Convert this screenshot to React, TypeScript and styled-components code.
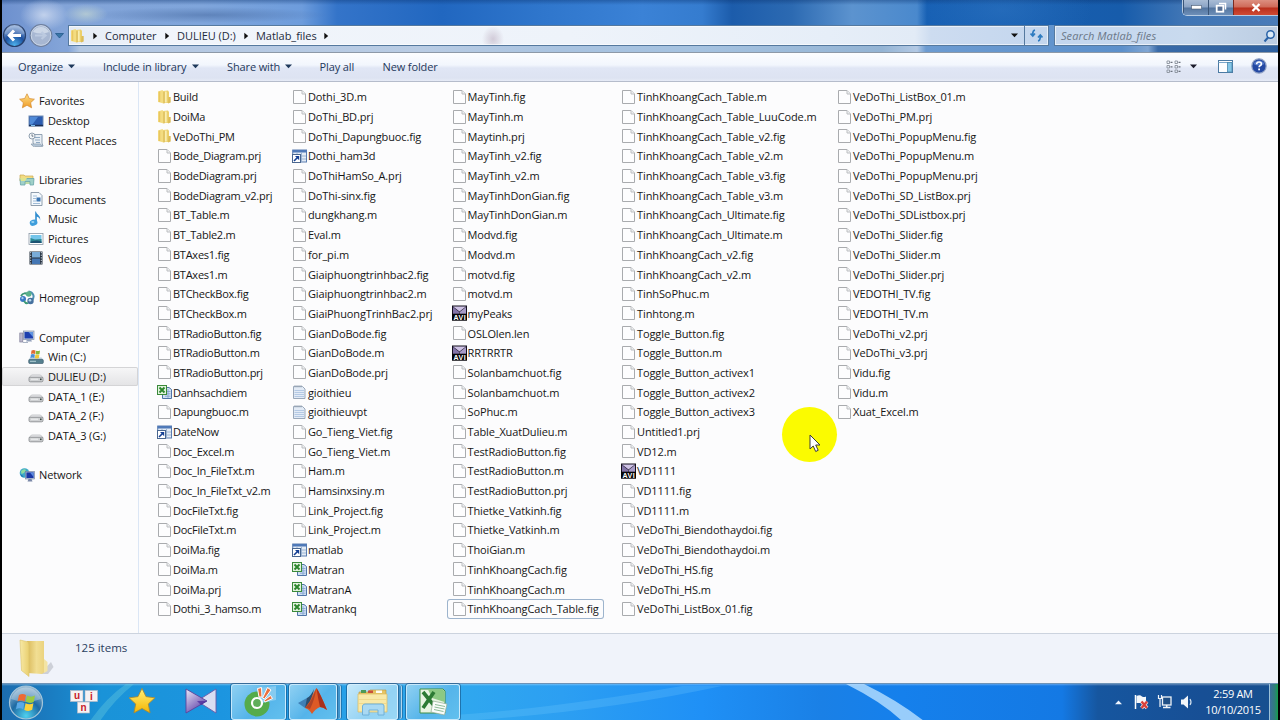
import React from "react";
import styled, { createGlobalStyle, css } from "styled-components";

const GlobalStyle = createGlobalStyle`
  html, body { margin: 0; padding: 0; background: #000; overflow: hidden; }
  * { box-sizing: border-box; }
`;

const ROW = "19.69px";

const Screen = styled.div`
  position: relative;
  width: 1280px;
  height: 720px;
  padding: 0 2px;
  background: #000;
  overflow: hidden;
  display: flex;
  flex-direction: column;
  font-family: "Open Sans", "Noto Sans", sans-serif;
  font-size: 11px;
  color: #161616;
  svg { display: block; flex: none; }
`;

/* ---------- window frame ---------- */

const Frame = styled.header`
  height: 53px;
  flex: none;
  display: flex;
  flex-direction: column;
  border-bottom: 1px solid #8d99a8;
  background:
    radial-gradient(ellipse 24px 16px at 42px 15px, rgba(205, 218, 240, 0.85), transparent),
    radial-gradient(ellipse 22px 10px at 84px 14px, rgba(196, 214, 210, 0.7), transparent),
    radial-gradient(ellipse 120px 8px at 206px 15px, rgba(70, 105, 160, 0.55), transparent),
    radial-gradient(ellipse 90px 40px at 1000px 10px, rgba(60, 130, 205, 0.35), transparent),
    linear-gradient(180deg, rgba(10, 50, 110, 0.4) 0, transparent 5px, transparent 100%),
    linear-gradient(90deg, #6d90ce 0, #83a4d8 60px, #7fa5db 200px, #6d9cdc 300px, #3474c9 335px,
      #2167c0 440px, #2f76cc 540px, #3b82d6 640px, #357ccf 700px, #1c5cab 730px, #2c6ab2 790px,
      #5c93cf 850px, #4a89cd 915px, #165fb3 925px, #175cab 1120px, #3f75b5 1180px, #4b7cb8 1276px);
`;

const TitleBar = styled.div`
  height: 25px;
  flex: none;
  display: flex;
  justify-content: flex-end;
`;

const WindowButtons = styled.div`
  display: flex;
  height: 16px;
  border: 1px solid #b6cbe2;
  border-top: 0;
  border-right: 0;
  border-radius: 0 0 0 5px;
  overflow: hidden;
`;

const WindowButton = styled.div<{ $w: number; $close?: boolean }>`
  width: ${(p) => p.$w}px;
  display: flex;
  align-items: center;
  justify-content: center;
  border-left: 1px solid ${(p) => (p.$close ? "#7b2a20" : "#3a5577")};
  background: ${(p) =>
    p.$close
      ? "linear-gradient(180deg, #dc8f80 0, #cf6a58 7px, #b92f1c 8px, #cf4a33 100%)"
      : "linear-gradient(180deg, #a9bcd5 0, #8ba4c5 7px, #54759f 8px, #6d8fb8 100%)"};
`;

const NavRow = styled.div`
  height: 27px;
  padding-bottom: 6px;
  display: flex;
  align-items: center;
  background:
    linear-gradient(90deg, rgba(120, 160, 205, 0) 0, rgba(120, 160, 205, 0) 66px, #b3c7e2 78px,
      #b9cce4 420px, #a9c3e0 560px, #a5c2e0 700px, #94b4d4 880px, #b3c9e4 915px, #6c9bd1 924px,
      #5c90cb 1120px, #80a6d3 1146px, #386aa8 1156px, #2e609f 1276px);
`;

const NavButtons = styled.div`
  width: 66px;
  display: flex;
  align-items: center;
  gap: 2px;
  padding-left: 0;
`;

const AddressBar = styled.div`
  width: 981px;
  height: 21px;
  border: 1px solid #55799f;
  box-shadow: inset 0 0 0 1px rgba(255, 255, 255, 0.6);
  background:
    radial-gradient(ellipse 11px 13px at 424px 13px, rgba(200, 190, 205, 0.75), transparent),
    linear-gradient(90deg, #e4ebf5 0, #f1f5fb 100px, #eef3fa 500px, #e6eef8 760px, #e2ebf6 846px,
      #cddcf0 862px, #c3d6ee 100%);
  display: flex;
  align-items: center;
  color: #1e2b3c;
  line-height: 15px;
  letter-spacing: -0.03px;
`;

const CrumbList = styled.div`
  flex: 1;
  display: flex;
  align-items: center;
`;

const Crumb = styled.span<{ $w: number }>`
  width: ${(p) => p.$w}px;
  white-space: nowrap;
  padding-bottom: 1px;
`;

const RefreshButton = styled.div`
  width: 24px;
  height: 19px;
  border-left: 1px solid #55799f;
  display: flex;
  align-items: center;
  justify-content: center;
`;

const SearchBox = styled.div`
  flex: 1;
  height: 21px;
  margin-left: 5px;
  padding: 0 0 0 6px;
  border: 1px solid #55799f;
  border-right: 0;
  box-shadow: inset 0 0 0 1px rgba(255, 255, 255, 0.6);
  background: linear-gradient(90deg, #c3d6ee, #c9daee 60%, #bccde2);
  display: flex;
  align-items: center;
  justify-content: space-between;
  font-style: italic;
  letter-spacing: 0.08px;
  color: #6b7788;
`;

/* ---------- toolbar ---------- */

const Toolbar = styled.div`
  height: 29px;
  flex: none;
  padding: 0 11px 2px 16px;
  display: flex;
  align-items: center;
  color: #1e395b;
  letter-spacing: -0.12px;
  border-bottom: 1px solid #b5bccb;
  background: linear-gradient(180deg, #fcfdff 0, #f2f6fd 12px, #e0e6f5 15px, #dde3f2 25px, #e6ebf6 100%);
`;

const ToolItem = styled.div<{ $w: number }>`
  width: ${(p) => p.$w}px;
  display: flex;
  align-items: center;
  gap: 5px;
  white-space: nowrap;
`;

const ToolIcons = styled.div`
  margin-left: auto;
  display: flex;
  align-items: center;
`;

const Gap = styled.span<{ $w: number }>`
  width: ${(p) => p.$w}px;
  flex: none;
`;

/* ---------- body ---------- */

const Body = styled.main`
  height: 551px;
  flex: none;
  display: flex;
  background: #fcfcfd;
`;

const Sidebar = styled.nav`
  width: 137px;
  padding-top: 9px;
  border-right: 1px solid #dbe6f5;
`;

const SideRow = styled.div<{ $level: number; $selected?: boolean }>`
  height: ${ROW};
  display: flex;
  align-items: center;
  gap: 4px;
  padding-left: ${(p) => (p.$level ? 26 : 17)}px;
  white-space: nowrap;
  letter-spacing: -0.12px;
  ${(p) =>
    p.$selected &&
    css`
      background: linear-gradient(180deg, #f7f7f8, #e3e3e5);
      box-shadow: inset 0 0 0 1px #d4d4d6;
      border-radius: 2px;
    `}
`;

const Files = styled.section`
  display: flex;
  padding: 5px 0 0 14px;
`;

const Column = styled.div<{ $w: number; $spacing: number }>`
  width: ${(p) => p.$w}px;
  letter-spacing: ${(p) => p.$spacing}px;
`;

const FileRow = styled.div<{ $focused?: boolean }>`
  height: ${ROW};
  width: max-content;
  display: flex;
  align-items: center;
  padding: 0 5px 0 4px;
  white-space: nowrap;
  ${(p) =>
    p.$focused &&
    css`
      margin-left: -1px;
      padding-left: 5px;
      box-shadow: inset 0 0 0 1px #9db4cd;
      border-radius: 3px;
    `}
`;

/* ---------- details pane ---------- */

const Details = styled.footer`
  height: 50px;
  flex: none;
  display: flex;
  align-items: flex-start;
  padding: 3px 0 0 16px;
  border-top: 1px solid #ccd3de;
  background: #f0f3fa;
  color: #2a405f;
  font-size: 11.5px;
`;

const ItemCount = styled.span`
  margin: 2px 0 0 19px;
  line-height: 17px;
`;

/* ---------- taskbar ---------- */

const Taskbar = styled.div`
  position: relative;
  height: 37px;
  flex: none;
  display: flex;
  border-top: 1px solid #6d93b8;
  background:
    linear-gradient(180deg, rgba(255, 255, 255, 0.3) 0, transparent 2px),
    linear-gradient(90deg, #1c6cae 0, #1a7bc0 45px, #1a93d8 100px, #1c95e0 220px, #30a9ee 440px,
      #2c9ff2 560px, #1f90f6 700px, #1a80e6 820px, #1580ec 900px, #1479e4 1060px, #16569f 1096px,
      #174f95 1200px, #17508f 1276px);
`;

const Streaks = styled.svg`
  position: absolute;
  left: 0;
  top: 0;
`;

const StartSlot = styled.div`
  position: relative;
  width: 52px;
  padding: 0 0 0 6px;
`;

const PinSlot = styled.div<{ $w: number }>`
  position: relative;
  width: ${(p) => p.$w}px;
  display: flex;
  align-items: center;
  justify-content: center;
  padding-bottom: 3px;
`;

const TaskButton = styled.div<{ $w: number; $stack?: boolean; $active?: boolean }>`
  position: relative;
  width: ${(p) => p.$w}px;
  height: 36px;
  margin-right: 2px;
  padding-bottom: 3px;
  display: flex;
  align-items: center;
  justify-content: center;
  border: 1px solid rgba(225, 244, 255, 0.8);
  border-radius: 3px;
  box-shadow:
    0 0 0 1px rgba(20, 80, 130, 0.6)
    ${(p) => p.$stack && ", 4px 0 0 -1px #3f94cb, 5px 0 0 -1px rgba(225, 244, 255, 0.75), 6px 0 0 -1px rgba(20, 80, 130, 0.5)"};
  background: ${(p) =>
    p.$active
      ? "linear-gradient(135deg, #c5e8fa, #93d2f3 60%, #9ad8f5)"
      : "linear-gradient(135deg, #8fd0f2, #55b4ea 55%, #62c0ee)"};
`;

const TaskButtons = styled.div`
  display: flex;
`;

const Tray = styled.div`
  position: relative;
  margin-left: auto;
  display: flex;
  align-items: center;
`;

const Clock = styled.div`
  width: 62px;
  margin: 0 5px 0 8px;
  color: #fff;
  text-align: center;
  line-height: 16px;
  letter-spacing: -0.3px;
  white-space: nowrap;
`;

const ShowDesktop = styled.div`
  width: 9px;
  height: 36px;
  border-left: 1px solid #9cc2d8;
  background: linear-gradient(90deg, #3a6f9c, #2f7e7a 60%, #14a04a);
`;

/* ---------- pointer ---------- */

const PointerHalo = styled.div`
  position: absolute;
  left: 782px;
  top: 407px;
  width: 55px;
  height: 55px;
  border-radius: 50%;
  background: #fbfb00;
`;

const PointerArrow = styled.svg`
  position: absolute;
  left: 27px;
  top: 27px;
`;

/* ---------- icons ---------- */

const Triangle = ({ dir, color = "#1e395b" }: { dir: "down" | "right" | "up"; color?: string }) =>
  dir === "right" ? (
    <svg width="5" height="8" viewBox="0 0 5 8"><path d="M0.300 0.700L4.200 4L0.300 7.300Z" fill={color} /></svg>
  ) : (
    <svg width="7" height="5" viewBox="0 0 7 5">
      <path d={dir === "down" ? "M0 0.500H7L3.500 4.300Z" : "M0 4.300H7L3.500 0.500Z"} fill={color} />
    </svg>
  );

const BlankIcon = () => (
  <svg width="16" height="16" viewBox="0 0 16 16">
    <path d="M1.500 1.500H10L13.500 5V14.500H1.500Z" fill="#fdfdfe" stroke="#a9abae" />
    <path d="M10 1.500V5H13.500" fill="#eef0f2" stroke="#bcbec1" />
  </svg>
);

const FolderIcon = () => (
  <svg width="16" height="16" viewBox="0 0 16 16">
    <path d="M6 2L11 1.500L12 3V14H6Z" fill="#ecd06c" />
    <path d="M11.500 8H13.700V13.500L11 14.500Z" fill="#dcbc58" />
    <path d="M1 2.500L5.500 1L6.800 3V14.500L1 13Z" fill="#f3dc80" />
    <path d="M2.500 2.500V13" stroke="#e9c760" strokeWidth="1.500" />
    <path d="M8.700 2.500V13.500" stroke="#faeeb0" strokeWidth="2" />
    <path d="M7 3V14.500" stroke="#cfa944" strokeWidth="0.800" />
  </svg>
);

const ExcelIcon = () => (
  <svg width="16" height="16" viewBox="0 0 16 16">
    <path d="M5.500 3.500H12L14.500 5.500V14.500H5.500Z" fill="#cfe0f3" stroke="#4f74a6" />
    <path d="M8 7.500H13.500M8 9.800H13.500M8 12.200H13.500M11 5V14" stroke="#7f9fcd" strokeWidth="0.800" />
    <rect x="0.500" y="1.500" width="9" height="9" fill="#e2f3de" stroke="#3b8a3a" />
    <path d="M2.500 3.500L7.500 8.500M7.500 3.500L2.500 8.500" stroke="#2c862c" strokeWidth="1.900" />
  </svg>
);

const ShortcutIcon = () => (
  <svg width="16" height="16" viewBox="0 0 16 16">
    <rect x="0.700" y="2" width="13.800" height="12" fill="#e3ebf5" stroke="#5a7db0" />
    <rect x="0.700" y="2" width="13.800" height="2.500" fill="#4f79b8" />
    <path d="M5 5V14M9.500 5V14M8 8H14M8 11H14" stroke="#93aecf" strokeWidth="0.900" />
    <rect x="0.500" y="6.500" width="8" height="8" fill="#fff" stroke="#49668f" />
    <path d="M2 13L5.500 9.500" stroke="#143f93" strokeWidth="1.600" />
    <path d="M3 8H7.200V12.200Z" fill="#143f93" />
  </svg>
);

const AviText = styled.text`
  font: bold 7px "Liberation Sans", sans-serif;
  fill: #fff;
`;

const AviIcon = () => (
  <svg width="16" height="16" viewBox="0 0 16 16">
    <rect x="0" y="0.500" width="15" height="15" fill="#15101f" />
    <path d="M1 1.500H14L7.500 6.500Z" fill="#cfc3e6" />
    <path d="M1 2L7.300 7V9H1Z" fill="#8273a8" />
    <path d="M14 2L7.700 7V9H14Z" fill="#a79bc8" />
    <rect x="0" y="8.700" width="15" height="6.800" fill="#050507" />
    <AviText x="1.500" y="14.800" textLength="12">AVI</AviText>
  </svg>
);

const TextIcon = () => (
  <svg width="16" height="16" viewBox="0 0 16 16">
    <path d="M1.500 2.500H10.500L13 5V14.500H1.500Z" fill="#e3ebf6" stroke="#9aa8ba" />
    <path d="M3 1V3.500M5 1V3.500M7 1V3.500M9 1V3.500" stroke="#98a3b3" strokeWidth="0.800" />
    <path d="M2.500 6.500H12M2.500 8.500H12M2.500 10.500H12M2.500 12.500H12" stroke="#b4c9e4" />
  </svg>
);

const STAR = "M8 0.800L10.300 5.500L15.400 6.200L11.600 9.700L12.600 14.800L8 12.300L3.400 14.800L4.400 9.700L0.600 6.200L5.700 5.500Z";

const StarIcon = ({ size = 16, gold = false }: { size?: number; gold?: boolean }) => (
  <svg width={size} height={size} viewBox="0 0 16 16">
    <defs>
      <linearGradient id={gold ? "goldStar" : "favStar"} x1="0" y1="0" x2="0" y2="1">
        <stop offset="0" stopColor={gold ? "#fff27a" : "#ffe28a"} />
        <stop offset="1" stopColor={gold ? "#f5b400" : "#ee9a26"} />
      </linearGradient>
    </defs>
    <path d={STAR} fill={`url(#${gold ? "goldStar" : "favStar"})`} stroke={gold ? "#a98a34" : "#d68a2e"} strokeWidth={gold ? 0.5 : 0.7} />
  </svg>
);

const DriveIcon = () => (
  <svg width="16" height="16" viewBox="0 0 16 16">
    <path d="M3.500 7H12.500L15 9.500H1Z" fill="#ebecee" stroke="#b2b4b8" strokeWidth="0.700" />
    <rect x="1" y="9.200" width="14" height="4.600" rx="1.300" fill="#cfd1d3" stroke="#808387" strokeWidth="0.800" />
    <rect x="3" y="10.700" width="7" height="1" fill="#f0f1f2" />
    <rect x="12" y="10.500" width="1.600" height="1.600" fill="#3d4b46" />
  </svg>
);

const sideIcons: Record<string, React.ReactElement> = {
  star: <StarIcon />,
  desktop: (
    <svg width="16" height="16" viewBox="0 0 16 16">
      <rect x="1" y="3" width="14" height="10" fill="#2b5cb0" stroke="#6f8bb5" />
      <path d="M2 4H10L4 12H2Z" fill="#4f8ad8" />
      <path d="M1 12.500H15" stroke="#1c2f55" strokeWidth="1.500" />
      <path d="M3 12.500H7" stroke="#7ec0f0" />
    </svg>
  ),
  recent: (
    <svg width="16" height="16" viewBox="0 0 16 16">
      <path d="M5 2.500H14V11L15 14H7L5 11Z" fill="#e9eff5" stroke="#8799ab" strokeWidth="0.900" />
      <path d="M7 5.500H12M7 8H12M8 10.500H12" stroke="#8fa9c3" />
      <path d="M3 12H12.500L14.500 14.300H5Z" fill="#b9cbdc" stroke="#8799ab" strokeWidth="0.700" />
      <circle cx="4" cy="4" r="3" fill="#f4f7fa" stroke="#8595a6" strokeWidth="0.900" />
      <path d="M4 2.300V4.200H5.400" stroke="#4b5b6b" strokeWidth="0.800" fill="none" />
    </svg>
  ),
  libraries: (
    <svg width="16" height="16" viewBox="0 0 16 16">
      <path d="M1 3H5L6 4H14V9H1Z" fill="#f2dc83" stroke="#cba84d" strokeWidth="0.700" />
      <path d="M2 6H14.500V12H2Z" fill="#c3dda8" />
      <path d="M1 6.500H15L14.500 13H11V9.500H6V13H1.500Z" fill="#9fd0c8" stroke="#6aa6ab" strokeWidth="0.800" />
      <path d="M1 6H8L6 9H2Z" fill="#dfe48d" />
    </svg>
  ),
  documents: (
    <svg width="16" height="16" viewBox="0 0 16 16">
      <path d="M3 1.500H11L14 4.500V14.500H3Z" fill="#f5f9fd" stroke="#8494a5" strokeWidth="0.900" />
      <path d="M5 5H9M5 7.500H8M5 10H8M5 12.500H12" stroke="#97b4d3" strokeWidth="0.900" />
      <rect x="8.500" y="6.500" width="4" height="4" fill="#3d77b4" />
    </svg>
  ),
  music: (
    <svg width="16" height="16" viewBox="0 0 16 16">
      <path d="M8 0.500C8.500 4 13.500 4.500 12 10C12.500 6.500 9.500 6 8.800 5.500V12H7.200V0.500Z" fill="#2f8ccf" />
      <ellipse cx="5.600" cy="11.700" rx="3.900" ry="3" transform="rotate(-18 5.600 11.700)" fill="#3f9edb" />
      <ellipse cx="4.800" cy="11" rx="1.600" ry="1" fill="#9ed5f3" />
    </svg>
  ),
  pictures: (
    <svg width="16" height="16" viewBox="0 0 16 16">
      <rect x="1" y="2.500" width="14" height="11" fill="#fff" stroke="#8a98a6" strokeWidth="0.800" />
      <rect x="2.500" y="4" width="11" height="8" fill="#74c5ea" />
      <path d="M2.500 7L7 8.500L13.500 8V12H2.500Z" fill="#2c8791" />
      <path d="M2.500 10.500L9 9.500L13.500 10.500V12H2.500Z" fill="#1c5273" />
    </svg>
  ),
  videos: (
    <svg width="16" height="16" viewBox="0 0 16 16">
      <rect x="1.500" y="1.500" width="13" height="13" fill="#24303f" />
      <rect x="4" y="2" width="8" height="5.500" fill="#79acd9" />
      <rect x="4" y="8.500" width="8" height="5.500" fill="#4577b4" />
      <path d="M2.700 2V14M13.300 2V14" stroke="#cdd7e2" strokeDasharray="1.300 1.300" />
    </svg>
  ),
  homegroup: (
    <svg width="16" height="16" viewBox="0 0 16 16">
      <path d="M9.500 1.500C14.500 2 16 7 13 10" stroke="#4e8fb0" strokeWidth="2" fill="none" />
      <path d="M2 6C4 2.500 7 3 8.500 4.500" stroke="#3b9576" strokeWidth="2" fill="none" />
      <circle cx="9.700" cy="4" r="2.800" fill="#5ab08a" />
      <circle cx="4" cy="9" r="3" fill="#3b78c4" />
      <circle cx="11.500" cy="11" r="3.200" fill="#46719f" />
      <circle cx="11" cy="10.200" r="1.300" fill="#b9dbee" />
      <circle cx="3.500" cy="8.200" r="1.100" fill="#a9d0f2" />
      <path d="M5 11C6.500 13.500 8 13.500 9 13" stroke="#3d9b77" strokeWidth="1.800" fill="none" />
    </svg>
  ),
  computer: (
    <svg width="16" height="16" viewBox="0 0 16 16">
      <rect x="4.500" y="2" width="10.500" height="8.500" fill="#c7d2e4" stroke="#8390a5" strokeWidth="0.700" />
      <rect x="5.500" y="3" width="8.500" height="6.500" fill="#1d3fae" />
      <path d="M9.500 3H14V8Z" fill="#5f93e0" />
      <rect x="0.800" y="4" width="3" height="9" fill="#b9b6cc" stroke="#82809b" strokeWidth="0.700" />
      <path d="M8 10.500H12L13 12.500H7Z" fill="#91a0bb" />
      <path d="M4 13.500H9" stroke="#a9b3c4" />
    </svg>
  ),
  win: (
    <svg width="16" height="16" viewBox="0 0 16 16">
      <path d="M2 8.500H13.500L15.500 11H0.500Z" fill="#b9ccd9" />
      <rect x="0.700" y="10.500" width="14.600" height="4" rx="1" fill="#55808f" stroke="#446272" strokeWidth="0.700" />
      <rect x="2" y="11.800" width="6" height="1" fill="#b3cfd6" />
      <path d="M3.500 1.500Q5.500 0.500 7.500 1.500L7 5Q5 4 3 5Z" fill="#e06a35" />
      <path d="M8 1.700Q10 2.500 12 1.500L11.500 5Q9.500 6 7.500 5Z" fill="#86b93e" />
      <path d="M2.900 5.400Q5 4.500 6.900 5.500L6.400 9Q4.500 8 2.400 9Z" fill="#4b8fd8" />
      <path d="M7.400 5.600Q9.500 6.500 11.400 5.500L10.900 9Q9 10 6.900 9Z" fill="#f2c838" />
    </svg>
  ),
  drive: <DriveIcon />,
  network: (
    <svg width="16" height="16" viewBox="0 0 16 16">
      <circle cx="5.500" cy="6" r="4.800" fill="#3da9c9" />
      <path d="M2 4Q5 1 7 3L5 6L2.500 7Z" fill="#8fdca0" />
      <path d="M1 7Q4 8 5 10.600Q2 10 1 7Z" fill="#1f6eb0" />
      <rect x="6.500" y="4.500" width="9" height="7.500" fill="#b9c6dd" stroke="#6d7c9b" strokeWidth="0.600" />
      <rect x="7.400" y="5.400" width="7.200" height="5.600" fill="#1a37a5" />
      <path d="M11 5.400H14.600V10Z" fill="#5c8be0" />
      <path d="M9.500 12H12.500L13.500 14.500H8.500Z" fill="#7a88a8" />
    </svg>
  ),
};

const BackIcon = () => (
  <svg width="25" height="25" viewBox="0 0 25 25">
    <defs>
      <radialGradient id="back" cx="0.5" cy="0.95" r="0.85">
        <stop offset="0" stopColor="#4fb4ee" />
        <stop offset="0.55" stopColor="#1c4f9f" />
        <stop offset="1" stopColor="#8aa9d6" />
      </radialGradient>
    </defs>
    <circle cx="12.500" cy="12.500" r="11" fill="url(#back)" stroke="#28406c" strokeWidth="1.200" />
    <path d="M2.500 11A10 10 0 0 1 22.500 11Q12 14 2.500 11Z" fill="#fff" opacity="0.180" />
    <path d="M12 7.500L7.300 12.500L12 17.500M8 12.500H19" fill="none" stroke="#fff" strokeWidth="3" />
  </svg>
);

const ForwardIcon = () => (
  <svg width="24" height="25" viewBox="0 0 24 25">
    <circle cx="12" cy="12.500" r="10.800" fill="#a7b7d2" stroke="#6e7f9d" strokeWidth="1.200" />
    <circle cx="12" cy="12.500" r="9.800" fill="none" stroke="#cbd6e7" />
    <path d="M4 9A9 9 0 0 1 20 9Q12 12 4 9Z" fill="#dbe4f0" opacity="0.700" />
    <path d="M6 12.500H15M12.500 9L16.500 12.500L12.500 16" fill="none" stroke="#bccae0" strokeWidth="2.200" />
  </svg>
);

const fileIcons: Record<string, () => React.ReactElement> = {
  folder: FolderIcon,
  excel: ExcelIcon,
  link: ShortcutIcon,
  avi: AviIcon,
  text: TextIcon,
};

/* ---------- data ---------- */

const sideItems: (null | [string, string, number])[] = [
  ["star", "Favorites", 0],
  ["desktop", "Desktop", 1],
  ["recent", "Recent Places", 1],
  null,
  ["libraries", "Libraries", 0],
  ["documents", "Documents", 1],
  ["music", "Music", 1],
  ["pictures", "Pictures", 1],
  ["videos", "Videos", 1],
  null,
  ["homegroup", "Homegroup", 0],
  null,
  ["computer", "Computer", 0],
  ["win", "Win (C:)", 1],
  ["drive", "DULIEU (D:)", 1],
  ["drive", "DATA_1 (E:)", 1],
  ["drive", "DATA_2 (F:)", 1],
  ["drive", "DATA_3 (G:)", 1],
  null,
  ["network", "Network", 0],
];

/* An entry may carry its icon kind after a "|"; plain entries get a blank page. */
const columns: { w: number; spacing: number; files: string }[] = [
  {
    w: 135,
    spacing: -0.25,
    files:
      "Build|folder DoiMa|folder VeDoThi_PM|folder Bode_Diagram.prj BodeDiagram.prj BodeDiagram_v2.prj BT_Table.m BT_Table2.m BTAxes1.fig BTAxes1.m BTCheckBox.fig BTCheckBox.m BTRadioButton.fig BTRadioButton.m BTRadioButton.prj Danhsachdiem|excel Dapungbuoc.m DateNow|link Doc_Excel.m Doc_In_FileTxt.m Doc_In_FileTxt_v2.m DocFileTxt.fig DocFileTxt.m DoiMa.fig DoiMa.m DoiMa.prj Dothi_3_hamso.m",
  },
  {
    w: 159.5,
    spacing: -0.14,
    files:
      "Dothi_3D.m DoThi_BD.prj DoThi_Dapungbuoc.fig Dothi_ham3d|link DoThiHamSo_A.prj DoThi-sinx.fig dungkhang.m Eval.m for_pi.m Giaiphuongtrinhbac2.fig Giaiphuongtrinhbac2.m GiaiPhuongTrinhBac2.prj GianDoBode.fig GianDoBode.m GianDoBode.prj gioithieu|text gioithieuvpt|text Go_Tieng_Viet.fig Go_Tieng_Viet.m Ham.m Hamsinxsiny.m Link_Project.fig Link_Project.m matlab|link Matran|excel MatranA|excel Matrankq|excel",
  },
  {
    w: 169.5,
    spacing: -0.13,
    files:
      "MayTinh.fig MayTinh.m Maytinh.prj MayTinh_v2.fig MayTinh_v2.m MayTinhDonGian.fig MayTinhDonGian.m Modvd.fig Modvd.m motvd.fig motvd.m myPeaks|avi OSLOlen.len RRTRRTR|avi Solanbamchuot.fig Solanbamchuot.m SoPhuc.m Table_XuatDulieu.m TestRadioButton.fig TestRadioButton.m TestRadioButton.prj Thietke_Vatkinh.fig Thietke_Vatkinh.m ThoiGian.m TinhKhoangCach.fig TinhKhoangCach.m TinhKhoangCach_Table.fig",
  },
  {
    w: 216,
    spacing: -0.1,
    files:
      "TinhKhoangCach_Table.m TinhKhoangCach_Table_LuuCode.m TinhKhoangCach_Table_v2.fig TinhKhoangCach_Table_v2.m TinhKhoangCach_Table_v3.fig TinhKhoangCach_Table_v3.m TinhKhoangCach_Ultimate.fig TinhKhoangCach_Ultimate.m TinhKhoangCach_v2.fig TinhKhoangCach_v2.m TinhSoPhuc.m Tinhtong.m Toggle_Button.fig Toggle_Button.m Toggle_Button_activex1 Toggle_Button_activex2 Toggle_Button_activex3 Untitled1.prj VD12.m VD1111|avi VD1111.fig VD1111.m VeDoThi_Biendothaydoi.fig VeDoThi_Biendothaydoi.m VeDoThi_HS.fig VeDoThi_HS.m VeDoThi_ListBox_01.fig",
  },
  {
    w: 160,
    spacing: -0.14,
    files:
      "VeDoThi_ListBox_01.m VeDoThi_PM.prj VeDoThi_PopupMenu.fig VeDoThi_PopupMenu.m VeDoThi_PopupMenu.prj VeDoThi_SD_ListBox.prj VeDoThi_SDListbox.prj VeDoThi_Slider.fig VeDoThi_Slider.m VeDoThi_Slider.prj VEDOTHI_TV.fig VEDOTHI_TV.m VeDoThi_v2.prj VeDoThi_v3.prj Vidu.fig Vidu.m Xuat_Excel.m",
  },
];

const FileEntry = ({ entry }: { entry: string }) => {
  const [name, kind] = entry.split("|");
  const Icon = (kind && fileIcons[kind]) || BlankIcon;
  return (
    <FileRow $focused={name === "TinhKhoangCach_Table.fig"}>
      <Icon />
      <span>{name}</span>
    </FileRow>
  );
};

const UnikeyText = styled.text`
  font: bold 10px "Liberation Sans", sans-serif;
  fill: #c8202a;
  text-anchor: middle;
`;

export default function App() {
  return (
    <Screen>
      <GlobalStyle />
      <Frame>
        <TitleBar>
          <WindowButtons>
            <WindowButton $w={25}>
              <svg width="11" height="5"><rect x="0.500" y="0.500" width="10" height="3.500" fill="#fff" stroke="#4a5a70" strokeWidth="0.600" /></svg>
            </WindowButton>
            <WindowButton $w={25}>
              <svg width="12" height="12" viewBox="0 0 12 12">
                <path d="M4 1.500H10.500V7.500" fill="none" stroke="#fff" strokeWidth="1.500" />
                <rect x="1.700" y="3.700" width="6.600" height="6" fill="#566f94" stroke="#fff" strokeWidth="1.800" />
              </svg>
            </WindowButton>
            <WindowButton $w={45} $close>
              <svg width="10" height="9" viewBox="0 0 10 9"><path d="M1.500 1L8.500 8M8.500 1L1.500 8" stroke="#fff" strokeWidth="2.300" /></svg>
            </WindowButton>
          </WindowButtons>
        </TitleBar>
        <NavRow>
          <NavButtons>
            <BackIcon />
            <ForwardIcon />
            <svg width="9" height="6" viewBox="0 0 9 6"><path d="M0.500 0.500H8.500L4.500 5Z" fill="#3a76a8" stroke="#1d5585" strokeWidth="0.700" /></svg>
          </NavButtons>
          <AddressBar>
            <CrumbList>
              <Gap $w={1} />
              <FolderIcon />
              <Gap $w={7} />
              <Triangle dir="right" color="#111" />
              <Gap $w={7} />
              <Crumb $w={60}>Computer</Crumb>
              <Triangle dir="right" color="#111" />
              <Gap $w={7} />
              <Crumb $w={67}>DULIEU (D:)</Crumb>
              <Triangle dir="right" color="#111" />
              <Gap $w={7} />
              <Crumb $w={68}>Matlab_files</Crumb>
              <Triangle dir="right" color="#111" />
            </CrumbList>
            <Triangle dir="down" color="#111" />
            <Gap $w={6} />
            <RefreshButton>
              <svg width="13" height="13" viewBox="0 0 13 13" fill="none" stroke="#2f7cc0" strokeWidth="1.700">
                <path d="M5 1Q2.500 1.500 2.700 6M0.500 4.500L2.800 7L5 4.500" />
                <path d="M8 12Q10.500 11.500 10.300 6.500M8 8.500L10.300 6L12.500 8.500" />
              </svg>
            </RefreshButton>
          </AddressBar>
          <SearchBox>
            <span>Search Matlab_files</span>
            <svg width="16" height="14" viewBox="0 0 16 14">
              <circle cx="8.500" cy="5.500" r="3.700" fill="#dcebf8" stroke="#2a63a8" strokeWidth="1.500" />
              <path d="M6 8.500L2.500 12.500" stroke="#2a63a8" strokeWidth="2" />
            </svg>
          </SearchBox>
        </NavRow>
      </Frame>

      <Toolbar>
        <ToolItem $w={85}>Organize<Triangle dir="down" /></ToolItem>
        <ToolItem $w={124}>Include in library<Triangle dir="down" /></ToolItem>
        <ToolItem $w={92.5}>Share with<Triangle dir="down" /></ToolItem>
        <ToolItem $w={63}>Play all</ToolItem>
        <ToolItem $w={60}>New folder</ToolItem>
        <ToolIcons>
          <svg width="15" height="13" viewBox="0 0 15 13" fill="none">
            <path d="M1 1H3.500V3.500H1ZM1 5.500H3.500V8H1ZM1 10H3.500V12.500H1ZM9 1H11.500V3.500H9ZM9 5.500H11.500V8H9ZM9 10H11.500V12.500H9Z" stroke="#8b929d" strokeWidth="0.900" />
            <path d="M4.500 2.300H6.500M4.500 6.800H6.500M4.500 11.300H6.500M12.500 2.300H14.500M12.500 6.800H14.500M12.500 11.300H14.500" stroke="#6c737e" strokeWidth="1.200" />
          </svg>
          <Gap $w={9} />
          <Triangle dir="down" color="#1a1a2a" />
          <Gap $w={21} />
          <svg width="15" height="13" viewBox="0 0 15 13">
            <rect x="0.500" y="0.500" width="14" height="12" fill="#fdfeff" stroke="#4b7aa3" />
            <path d="M0.500 2.500H14.500" stroke="#7ba6c9" />
            <rect x="9.500" y="2.500" width="4.500" height="9.500" fill="#85c6e6" stroke="#4b88ad" strokeWidth="0.800" />
          </svg>
          <Gap $w={18} />
          <svg width="16" height="16" viewBox="0 0 16 16">
            <circle cx="8" cy="8" r="7.200" fill="#2449a3" stroke="#8ea0c4" strokeWidth="1.200" />
            <path d="M2.500 6A6 6 0 0 1 13.500 6Q8 9 2.500 6Z" fill="#6a90d8" opacity="0.700" />
            <path d="M5.600 6.200Q5.700 4 8.100 4Q10.400 4 10.400 5.900Q10.400 7 9 7.800Q8.100 8.300 8.100 9.300" fill="none" stroke="#fff" strokeWidth="1.600" />
            <rect x="7.200" y="10.500" width="1.800" height="1.800" fill="#fff" />
          </svg>
        </ToolIcons>
      </Toolbar>

      <Body>
        <Sidebar>
          {sideItems.map((item, i) =>
            item ? (
              <SideRow key={i} $level={item[2]} $selected={item[1] === "DULIEU (D:)"}>
                {sideIcons[item[0]]}
                <span>{item[1]}</span>
              </SideRow>
            ) : (
              <SideRow key={i} $level={0} />
            )
          )}
        </Sidebar>
        <Files>
          {columns.map((c) => (
            <Column key={c.w} $w={c.w} $spacing={c.spacing}>
              {c.files.split(" ").map((f) => (
                <FileEntry key={f} entry={f} />
              ))}
            </Column>
          ))}
        </Files>
      </Body>

      <Details>
        <svg width="38" height="42" viewBox="0 0 38 42">
          <defs>
            <linearGradient id="folderFront" x1="0" x2="1" y1="0" y2="0">
              <stop offset="0" stopColor="#f7e9a6" />
              <stop offset="1" stopColor="#e9cf70" />
            </linearGradient>
            <linearGradient id="folderBack" x1="0" x2="1" y1="0" y2="0">
              <stop offset="0" stopColor="#d9b95a" />
              <stop offset="0.500" stopColor="#f1de93" />
              <stop offset="1" stopColor="#e9d07a" />
            </linearGradient>
          </defs>
          <path d="M22 37L33 25L35.500 30L30 37Z" fill="#a9adb6" opacity="0.500" />
          <path d="M9 4H26V23L28 25V34L24 37L9 36Z" fill="url(#folderBack)" />
          <path d="M26 22L29.500 25V34L26 36Z" fill="#f3e4a4" />
          <path d="M2 3L10.500 5L11 8V39.500L3.500 33.500Z" fill="url(#folderFront)" stroke="#dcc268" strokeWidth="0.600" />
        </svg>
        <ItemCount>125 items</ItemCount>
      </Details>

      <Taskbar>
        <Streaks width="1276" height="37" viewBox="0 0 1276 37">
          <path d="M88 37Q104 14 124 0H132Q112 16 98 37Z" fill="#6fd0e0" opacity="0.350" />
          <path d="M440 32Q540 26 680 2H720Q600 28 460 37Z" fill="#7fd0ff" opacity="0.220" />
          <path d="M844 0H862Q895 16 922 37H900Q880 18 844 0Z" fill="#b9e0ff" opacity="0.800" />
        </Streaks>
        <StartSlot>
          <svg width="36" height="36" viewBox="0 0 36 36">
            <defs>
              <radialGradient id="orb" cx="0.5" cy="0.9" r="0.9">
                <stop offset="0" stopColor="#4fd0ee" />
                <stop offset="0.500" stopColor="#1d6aa4" />
                <stop offset="1" stopColor="#9fbfd6" />
              </radialGradient>
            </defs>
            <circle cx="18" cy="18.500" r="16.500" fill="url(#orb)" stroke="#a5c6da" strokeWidth="1.200" />
            <path d="M3 15A15.500 15.500 0 0 1 33 15Q18 21 3 15Z" fill="#fff" opacity="0.300" />
            <path d="M11 11Q14.500 8.800 18 11L16.700 17.500Q13 15.500 9.500 17.500Z" fill="#ee6a32" />
            <path d="M19 11.500Q23 13.800 27 11.500L25.700 18Q22 20 17.700 17.800Z" fill="#9bcb42" />
            <path d="M9.200 18.700Q12.800 17 16.400 18.900L15.200 25.300Q11.500 23.300 8 25.300Z" fill="#5aa9e6" />
            <path d="M17.500 19.300Q21.500 21.300 25.400 19.200L24.200 25.800Q20.500 28 16.300 25.900Z" fill="#fbd23a" />
          </svg>
        </StartSlot>
        <PinSlot $w={60}>
          <svg width="28" height="26" viewBox="0 0 28 26">
            <g fill="#f6f2f3" stroke="#b3b9c6" strokeWidth="0.700">
              <rect x="0.500" y="2.500" width="12.500" height="11" />
              <rect x="15" y="2.500" width="12.500" height="11" />
              <rect x="7.500" y="14" width="12" height="11" />
            </g>
            <UnikeyText x="7" y="11">u</UnikeyText>
            <UnikeyText x="21.500" y="11.500">i</UnikeyText>
            <UnikeyText x="13.500" y="22.500">n</UnikeyText>
          </svg>
        </PinSlot>
        <PinSlot $w={56}><StarIcon size={28} gold /></PinSlot>
        <PinSlot $w={61}>
          <svg width="32" height="28" viewBox="0 0 32 28">
            <defs>
              <linearGradient id="playLeft" x1="0" y1="0" x2="0.7" y2="1">
                <stop offset="0" stopColor="#eceaf8" />
                <stop offset="1" stopColor="#5a3aa6" />
              </linearGradient>
            </defs>
            <path d="M31 2V26L12 14Z" fill="#d9def2" stroke="#6a5aa8" strokeWidth="0.900" />
            <path d="M1 2L22 14L1 26Z" fill="url(#playLeft)" stroke="#5b439b" strokeWidth="0.900" />
            <path d="M12 14L22 14L16 18Z" fill="#4a2899" opacity="0.700" />
          </svg>
        </PinSlot>
        <TaskButtons>
          <TaskButton $w={55}>
            <svg width="34" height="32" viewBox="0 0 34 32">
              <circle cx="15" cy="19" r="12.500" fill="#55ab4b" />
              <path d="M16.500 16L17.500 3L34 1V15L20 18Z" fill="#86cbf0" />
              <circle cx="15" cy="18" r="5" fill="#5fae5a" stroke="#fff" strokeWidth="2.200" />
              <path d="M17 12L15.500 3.500L19.500 2.500L20 12Z" fill="#e9703f" stroke="#fff" />
              <path d="M20.500 13L25.500 2.500L29 5L22.500 14Z" fill="#e9703f" stroke="#fff" />
              <path d="M22 15.500L28.500 10.500L30.500 13.500L23 17Z" fill="#e9703f" stroke="#fff" />
            </svg>
          </TaskButton>
          <Gap $w={1} />
          <TaskButton $w={48} $stack>
            <svg width="32" height="28" viewBox="0 0 32 28">
              <path d="M1 16L10 11L14 14L8 21Z" fill="#3f7fb5" />
              <path d="M10 11Q14 9 17 2L14 16L8 21Z" fill="#2b4f70" />
              <path d="M8 21L13 14Q17 4 19.500 1Q23 6 30 23Q26 20 23 20Q18 22 15 27Q12 22 8 21Z" fill="#dd5a26" />
              <path d="M19.500 1Q23 6 30 23Q26 20 23 20Q21 12 19.500 1Z" fill="#a8301c" />
              <path d="M19 2Q18 12 13 22Q11 21 8 21Q14 16 19 2Z" fill="#9a3a2a" opacity="0.700" />
            </svg>
          </TaskButton>
          <Gap $w={8} />
          <TaskButton $w={51} $active $stack>
            <svg width="32" height="30" viewBox="0 0 32 30">
              <path d="M2 6H11L13 4H29V24H2Z" fill="#e6c564" stroke="#b8963e" strokeWidth="0.600" />
              <path d="M4 4H9V7H4Z" fill="#4c9a57" />
              <path d="M11 4.500H16V7H11Z" fill="#c9503c" />
              <path d="M19 4.500H25V7H19Z" fill="#fdfdf6" />
              <path d="M1 8H30V26H1Z" fill="#f8e9a8" stroke="#d8ba62" strokeWidth="0.700" />
              <path d="M1 13.500H30M1 17.500H30" stroke="#ecd486" strokeWidth="0.800" />
              <path d="M8 18H25Q27 18 27 20V29H21V24H12V29H5.500V20Q6 18 8 18Z" fill="#a9d9f3" stroke="#6fb0d8" />
            </svg>
          </TaskButton>
          <Gap $w={6} />
          <TaskButton $w={54}>
            <svg width="30" height="30" viewBox="0 0 30 30">
              <path d="M2 3H25L27 5V27H2Z" fill="#e8f4e2" stroke="#3f8f46" />
              <path d="M10 3.500H25L26.500 5.500V16L14 12Z" fill="#8cc983" />
              <path d="M5 6L18 22M16 6L5 22" stroke="#2c7a34" strokeWidth="3.600" />
              <path d="M15 15L29 18L26.500 29L13 26Z" fill="#fafcfa" stroke="#8fae92" strokeWidth="0.700" />
              <path d="M17 18.500L27 20.500M16.500 21L26.500 23M16 23.500L25.500 25.500" stroke="#8dbb96" />
            </svg>
          </TaskButton>
        </TaskButtons>
        <Tray>
          <Triangle dir="up" color="#eef5ff" />
          <Gap $w={12} />
          <svg width="15" height="16" viewBox="0 0 15 16">
            <path d="M1.500 1V15" stroke="#fff" strokeWidth="1.500" />
            <path d="M2.500 2Q6 0.500 8 2.500Q10 3.500 12 2.500V9H2.500Z" fill="#f4f7fb" />
            <path d="M7.500 7.500L13 14M13 7.500L7.500 14" stroke="#fbe4e0" strokeWidth="3.600" />
            <path d="M7.500 7.500L13 14M13 7.500L7.500 14" stroke="#d8403a" strokeWidth="2.300" />
          </svg>
          <Gap $w={8} />
          <svg width="15" height="16" viewBox="0 0 15 16" fill="none" stroke="#eef3f8">
            <path d="M1.500 1V4.500H4.500V1M3 4.500V13" strokeWidth="1.200" />
            <rect x="5.500" y="3" width="8.500" height="8" strokeWidth="1.300" fill="#1f4f86" />
            <path d="M6 13.500H13.500M9.700 11V13.500" strokeWidth="1.600" />
          </svg>
          <Gap $w={8} />
          <svg width="14" height="16" viewBox="0 0 14 16">
            <path d="M1 5.500H3.500L8 1.500V14.500L3.500 10.500H1Z" fill="#f2f6fa" />
            <path d="M10 5Q12 8 10 11" stroke="#d5e2ef" fill="none" strokeWidth="1.200" />
          </svg>
          <Clock>
            <div>2:59 AM</div>
            <div>10/10/2015</div>
          </Clock>
          <ShowDesktop />
        </Tray>
      </Taskbar>

      <PointerHalo>
        <PointerArrow width="13" height="20" viewBox="0 0 13 20">
          <path d="M1 1V15L4.200 12L6.700 17.500L9.200 16.300L6.700 11H11Z" fill="#fff" stroke="#3a3a3a" />
        </PointerArrow>
      </PointerHalo>
    </Screen>
  );
}
